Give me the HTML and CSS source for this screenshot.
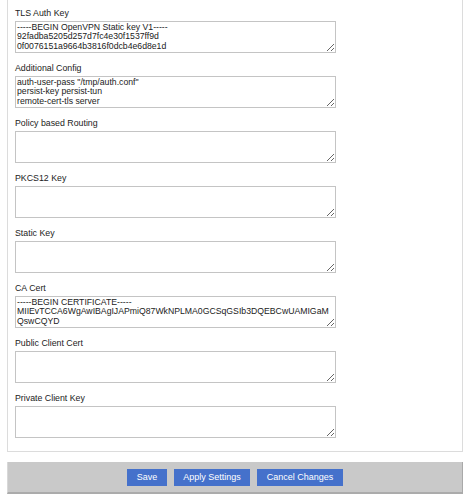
FILE: index.html
```html
<!DOCTYPE html>
<html>
<head>
<meta charset="utf-8">
<link rel="stylesheet" href="styles.css">
</head>
<body>
<div class="panel">
  <div class="field">
    <label class="label">TLS Auth Key</label>
    <textarea class="box" spellcheck="false">-----BEGIN OpenVPN Static key V1-----
92fadba5205d257d7fc4e30f1537ff9d
0f0076151a9664b3816f0dcb4e6d8e1d</textarea>
  </div>
  <div class="field">
    <label class="label">Additional Config</label>
    <textarea class="box" spellcheck="false">auth-user-pass "/tmp/auth.conf"
persist-key persist-tun
remote-cert-tls server</textarea>
  </div>
  <div class="field">
    <label class="label">Policy based Routing</label>
    <textarea class="box"></textarea>
  </div>
  <div class="field">
    <label class="label">PKCS12 Key</label>
    <textarea class="box"></textarea>
  </div>
  <div class="field">
    <label class="label">Static Key</label>
    <textarea class="box"></textarea>
  </div>
  <div class="field">
    <label class="label">CA Cert</label>
    <textarea class="box" spellcheck="false">-----BEGIN CERTIFICATE-----
MIIEvTCCA6WgAwIBAgIJAPmiQ87WkNPLMA0GCSqGSIb3DQEBCwUAMIGaM
QswCQYD</textarea>
  </div>
  <div class="field">
    <label class="label">Public Client Cert</label>
    <textarea class="box"></textarea>
  </div>
  <div class="field">
    <label class="label">Private Client Key</label>
    <textarea class="box"></textarea>
  </div>
</div>
<div class="bar">
  <button class="btn">Save</button>
  <button class="btn">Apply Settings</button>
  <button class="btn">Cancel Changes</button>
</div>
</body>
</html>
```
FILE: styles.css
```css
html, body {
  margin: 0;
  padding: 0;
  background: #ffffff;
  font-family: "Liberation Sans", Arial, sans-serif;
  color: #222;
}
.panel {
  margin-left: 7px;
  width: 447px;
  border: 1px solid #dcdcdc;
  border-top: none;
  padding: 8px 0 13px 7px;
  box-sizing: content-box;
  display: flex;
  flex-direction: column;
  gap: 10px;
}
.field {
  display: flex;
  flex-direction: column;
  gap: 3px;
}
.label {
  font-size: 8.8px;
  line-height: 10px;
  height: 10px;
  color: #222;
}
.box {
  width: 321px;
  height: 32px;
  box-sizing: border-box;
  border: 1px solid #c4c4c4;
  padding: 1px 1px;
  margin: 0;
  font-family: "Liberation Sans", Arial, sans-serif;
  font-size: 8.7px;
  line-height: 9.3px;
  color: #222;
  background: #fff;
  outline: none;
  overflow: hidden;
}
.bar {
  margin: 10px 0 0 7px;
  width: 456px;
  height: 32px;
  box-sizing: border-box;
  background: #c9c9c9;
  border-left: 1px solid #d8d8d8;
  border-right: 1px solid #a9a9a9;
  border-bottom: 2px solid #ababab;
  display: flex;
  justify-content: center;
  align-items: center;
  gap: 7px;
  padding-top: 1px;
}
.btn {
  height: 17px;
  padding: 0 9.5px;
  margin: 0;
  border: none;
  background: #4571cb;
  color: #fff;
  font-family: "Liberation Sans", Arial, sans-serif;
  font-size: 9px;
  line-height: 17px;
}
```
